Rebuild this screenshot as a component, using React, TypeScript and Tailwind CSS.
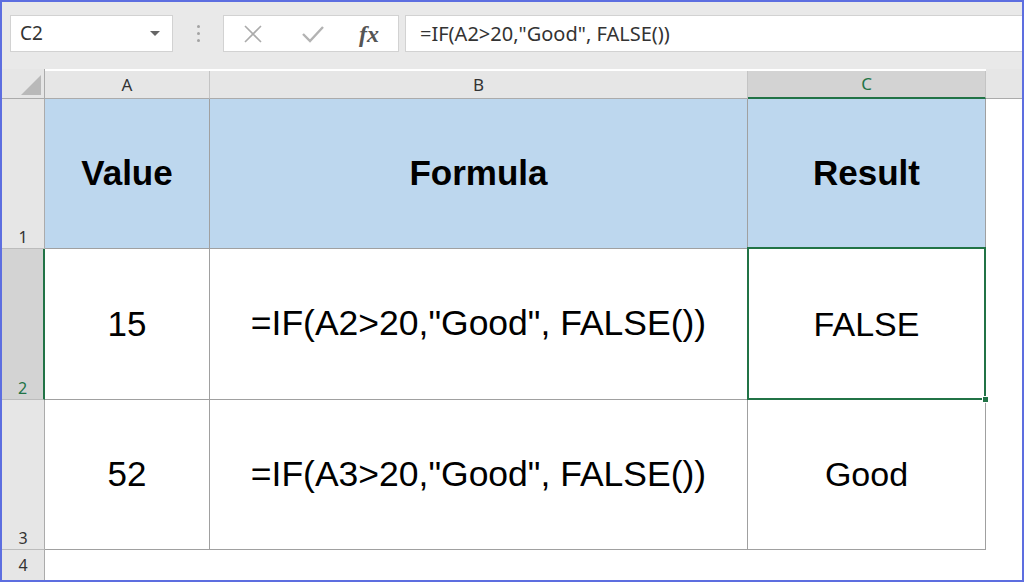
import React from 'react';

const ui = { fontFamily: '"Noto Sans", "Open Sans", sans-serif' };
const cell = { fontFamily: '"Liberation Sans", Arial, sans-serif' };

function RowHead({ n, active }: { n: number; active?: boolean }) {
  return (
    <div
      style={ui}
      className={`flex items-end justify-center border-b border-[#bcbcbc] text-[16px] leading-[22px] ${
        active
          ? 'bg-[#d3d3d3] text-[#217346] border-r-2 border-r-[#217346]'
          : 'bg-[#e6e6e6] text-[#333] border-r border-r-[#ababab]'
      }`}
    >
      {n}
    </div>
  );
}

function ColHead({ label, active }: { label: string; active?: boolean }) {
  return (
    <div
      style={ui}
      className={`mt-[2px] flex items-center justify-center border-r border-[#c4c4c4] text-[17px] ${
        active
          ? 'bg-[#d3d3d3] text-[#217346] border-b-2 border-b-[#217346]'
          : 'bg-[#e6e6e6] text-[#333] border-b border-b-[#ababab]'
      }`}
    >
      {label}
    </div>
  );
}

export default function App() {
  return (
    <div className="w-[1024px] h-[582px] border-2 border-[#5d6ee0] bg-white flex flex-col overflow-hidden">
      {/* Formula bar */}
      <div className="h-[67px] shrink-0 bg-[#e9e9e9] flex items-start pt-[13px] pl-[8px]">
        <div
          style={ui}
          className="w-[163px] h-[37px] bg-white border border-[#d2d2d2] flex items-center justify-between pl-[9px] pr-[12px] text-[19px] text-[#333]"
        >
          <span>C2</span>
          <svg width="10" height="6" viewBox="0 0 10 6">
            <path d="M0 0 L10 0 L5 5 Z" fill="#666" />
          </svg>
        </div>
        <div className="w-[50px] h-[37px] flex flex-col items-center justify-center gap-[4px]">
          <span className="w-[3px] h-[3px] rounded-full bg-[#a3a3a3]" />
          <span className="w-[3px] h-[3px] rounded-full bg-[#a3a3a3]" />
          <span className="w-[3px] h-[3px] rounded-full bg-[#a3a3a3]" />
        </div>
        <div className="w-[176px] h-[37px] bg-white border border-[#d2d2d2] flex items-center pl-[19px]">
          <svg width="20" height="18" viewBox="0 0 20 18">
            <path d="M2 1 L18 17 M18 1 L2 17" stroke="#ababab" strokeWidth="1.6" fill="none" />
          </svg>
          <svg width="24" height="18" viewBox="0 0 24 18" className="ml-[38px]">
            <path d="M2 9 L9 16 L22 2" stroke="#b3b3b3" strokeWidth="2.4" fill="none" />
          </svg>
          <span
            style={{ fontFamily: '"Liberation Serif", "Times New Roman", serif' }}
            className="ml-[34px] italic font-bold text-[24px] text-[#555] leading-none"
          >
            fx
          </span>
        </div>
        <div
          style={ui}
          className="ml-[6px] flex-1 h-[37px] bg-white border border-[#d2d2d2] border-r-0 flex items-center pl-[14px] text-[20px] text-[#333]"
        >
          =IF(A2&gt;20,"Good", FALSE())
        </div>
      </div>

      {/* Sheet grid */}
      <div className="flex-1 grid grid-cols-[43px_165px_538px_238px_1fr] grid-rows-[30px_150px_151px_150px_1fr]">
        {/* header row */}
        <div className="bg-[#e6e6e6] border-r border-b border-[#ababab] flex items-end justify-end pr-[3px] pb-[3px]">
          <svg width="20" height="20" viewBox="0 0 20 20">
            <path d="M20 0 L20 20 L0 20 Z" fill="#b9b9b9" />
          </svg>
        </div>
        <ColHead label="A" />
        <ColHead label="B" />
        <ColHead label="C" active />
        <div className="bg-[#e6e6e6] border-b border-[#ababab]" />

        {/* row 1 */}
        <RowHead n={1} />
        {['Value', 'Formula', 'Result'].map((t) => (
          <div
            key={t}
            style={cell}
            className="bg-[#bdd7ee] border-r border-b border-[#a0a0a0] flex items-center justify-center text-[35px] font-bold text-black"
          >
            {t}
          </div>
        ))}
        <div className="bg-white" />

        {/* row 2 */}
        <RowHead n={2} active />
        <div style={cell} className="border-r border-b border-[#a0a0a0] flex items-center justify-center text-[35px] text-black">
          15
        </div>
        <div style={cell} className="border-r border-b border-[#a0a0a0] flex items-center justify-center text-[35.5px] text-black">
          =IF(A2&gt;20,"Good", FALSE())
        </div>
        <div style={cell} className="relative border-r border-b border-[#a0a0a0] flex items-center justify-center text-[34px] text-black">
          FALSE
          <div className="absolute left-[-1px] top-[-2px] right-[-1px] bottom-[-1px] border-2 border-[#217346]" />
          <div className="absolute right-[-4px] bottom-[-4px] w-[7px] h-[7px] bg-[#217346] border border-white" />
        </div>
        <div className="bg-white" />

        {/* row 3 */}
        <RowHead n={3} />
        <div style={cell} className="border-r border-b border-[#a0a0a0] flex items-center justify-center text-[35px] text-black">
          52
        </div>
        <div style={cell} className="border-r border-b border-[#a0a0a0] flex items-center justify-center text-[35.5px] text-black">
          =IF(A3&gt;20,"Good", FALSE())
        </div>
        <div style={cell} className="border-r border-b border-[#a0a0a0] flex items-center justify-center text-[34px] text-black">
          Good
        </div>
        <div className="bg-white" />

        {/* row 4 */}
        <div style={ui} className="bg-[#e6e6e6] border-r border-[#ababab] flex items-center justify-center text-[16px] text-[#333]">
          4
        </div>
        <div className="col-span-4 bg-white" />
      </div>
    </div>
  );
}
